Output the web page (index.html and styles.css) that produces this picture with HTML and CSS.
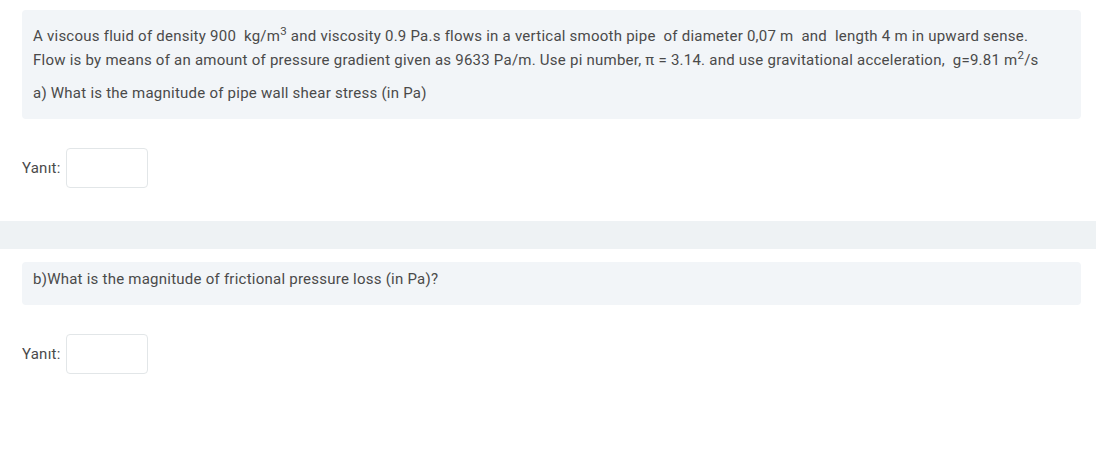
FILE: index.html
```html
<!DOCTYPE html>
<html lang="tr">
<head>
<meta charset="utf-8">
<link rel="stylesheet" href="styles.css">
</head>
<body>
<div class="que">
  <div class="formulation">
    <p class="p1">A viscous fluid of density 900&nbsp; kg/m<sup>3</sup> and viscosity 0.9 Pa.s flows in a vertical smooth pipe&nbsp; of diameter 0,07 m&nbsp; and&nbsp; length 4 m in upward sense.<br>Flow is by means of an amount of pressure gradient given as 9633 Pa/m. Use pi number, π = 3.14. and use gravitational acceleration,&nbsp; g=9.81 m<sup>2</sup>/s</p>
    <p class="p2">a) What is the magnitude of pipe wall shear stress (in Pa)</p>
  </div>
  <div class="answer">
    <label class="lbl">Yanıt:</label>
    <input class="inp" type="text">
  </div>
</div>
<div class="band"></div>
<div class="que">
  <div class="formulation small">
    <p class="p2">b)What is the magnitude of frictional pressure loss (in Pa)?</p>
  </div>
  <div class="answer second">
    <label class="lbl">Yanıt:</label>
    <input class="inp" type="text">
  </div>
</div>
</body>
</html>
```
FILE: styles.css
```css
html, body {
  margin: 0;
  padding: 0;
  background: #ffffff;
}
body {
  font-family: Roboto, "Liberation Sans", sans-serif;
  font-size: 15px;
  letter-spacing: 0.24px;
  color: #4a4a4a;
  width: 1096px;
}
.que {
  padding: 10px 15px 0 22px;
}
.formulation {
  background: #f2f5f8;
  border-radius: 4px;
  padding: 14px 11px 14px 11px;
  height: 81px;
  white-space: nowrap;
}
.formulation.small {
  height: auto;
  padding: 5px 11px 14px 11px;
}
.p1 {
  margin: 0;
  line-height: 24px;
}
.p2 {
  margin: 9px 0 0 0;
  line-height: 24px;
}
.small .p2 {
  margin: 0;
}
sup {
  line-height: 0;
  font-size: 11.5px;
  vertical-align: 6px;
}
.answer {
  display: flex;
  align-items: center;
  gap: 5px;
  margin-top: 29px;
  padding-bottom: 33px;
}
.inp {
  width: 82px;
  height: 40px;
  box-sizing: border-box;
  border: 1px solid #e2e6e8;
  border-radius: 4px;
  background: #fff;
  padding: 0 6px;
  font-family: inherit;
  font-size: 15px;
  outline: none;
}
.band {
  height: 28px;
  background: #eef2f4;
}
.que + .band + .que {
  padding-top: 13px;
}
```
